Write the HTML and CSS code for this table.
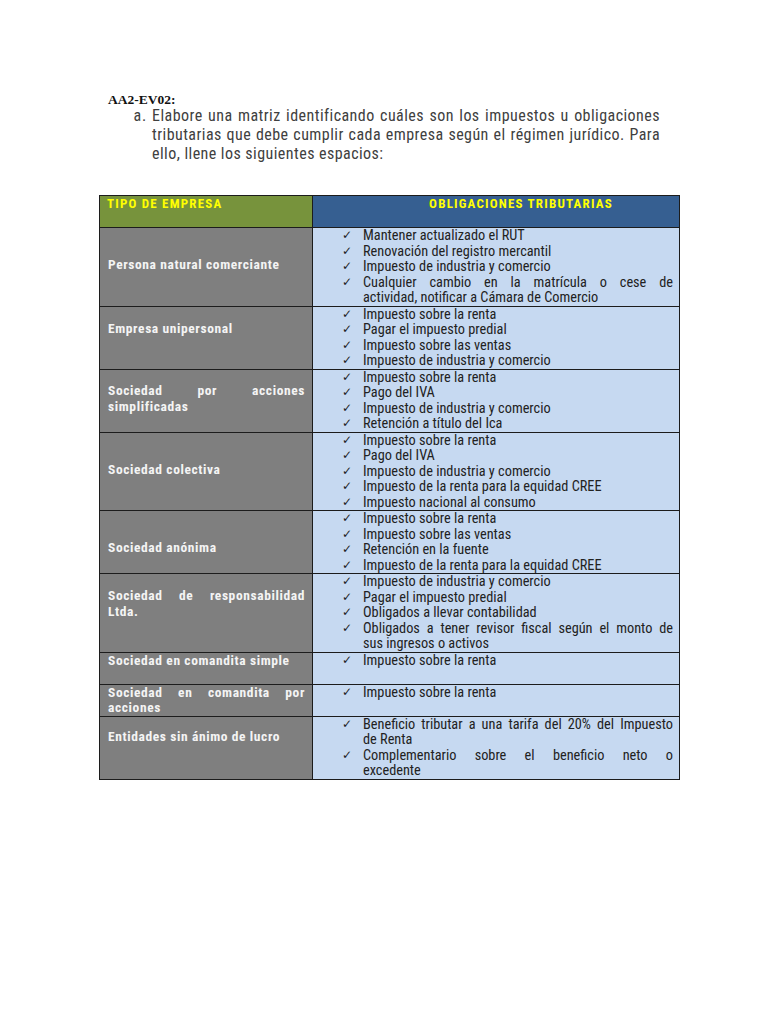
FILE: index.html
```html
<!DOCTYPE html>
<html lang="es">
<head>
<meta charset="utf-8">
<title>AA2-EV02</title>
<link rel="stylesheet" href="styles.css">
</head>
<body>
<main class="page">
  <h1 class="title">AA2-EV02:</h1>
  <ol class="steps">
    <li><span class="jl">Elabore una matriz identificando cuáles son los impuestos u obligaciones</span> <span class="jl">tributarias que debe cumplir cada empresa según el régimen jurídico. Para</span> <span class="ln">ello, llene los siguientes espacios:</span></li>
  </ol>

  <table class="matrix">
    <colgroup><col class="c1"><col class="c2"></colgroup>
    <thead>
      <tr>
        <th class="h-type">TIPO DE EMPRESA</th>
        <th class="h-obl">OBLIGACIONES TRIBUTARIAS</th>
      </tr>
    </thead>
    <tbody>
      <tr>
        <td class="type mid">Persona natural comerciante</td>
        <td class="obl"><ul>
          <li>Mantener actualizado el RUT</li>
          <li>Renovación del registro mercantil</li>
          <li>Impuesto de industria y comercio</li>
          <li><span class="jl">Cualquier cambio en la matrícula o cese de</span> <span class="ln">actividad, notificar a Cámara de Comercio</span></li>
        </ul></td>
      </tr>
      <tr>
        <td class="type top14">Empresa unipersonal</td>
        <td class="obl"><ul>
          <li>Impuesto sobre la renta</li>
          <li>Pagar el impuesto predial</li>
          <li>Impuesto sobre las ventas</li>
          <li>Impuesto de industria y comercio</li>
        </ul></td>
      </tr>
      <tr>
        <td class="type mid"><span class="jl">Sociedad por acciones</span> <span class="ln">simplificadas</span></td>
        <td class="obl"><ul>
          <li>Impuesto sobre la renta</li>
          <li>Pago del IVA</li>
          <li>Impuesto de industria y comercio</li>
          <li>Retención a título del Ica</li>
        </ul></td>
      </tr>
      <tr>
        <td class="type mid">Sociedad colectiva</td>
        <td class="obl"><ul>
          <li>Impuesto sobre la renta</li>
          <li>Pago del IVA</li>
          <li>Impuesto de industria y comercio</li>
          <li>Impuesto de la renta para la equidad CREE</li>
          <li>Impuesto nacional al consumo</li>
        </ul></td>
      </tr>
      <tr>
        <td class="type mid low">Sociedad anónima</td>
        <td class="obl"><ul>
          <li>Impuesto sobre la renta</li>
          <li>Impuesto sobre las ventas</li>
          <li>Retención en la fuente</li>
          <li>Impuesto de la renta para la equidad CREE</li>
        </ul></td>
      </tr>
      <tr>
        <td class="type top14"><span class="jl">Sociedad de responsabilidad</span> <span class="ln">Ltda.</span></td>
        <td class="obl"><ul>
          <li>Impuesto de industria y comercio</li>
          <li>Pagar el impuesto predial</li>
          <li>Obligados a llevar contabilidad</li>
          <li><span class="jl">Obligados a tener revisor fiscal según el monto de</span> <span class="ln">sus ingresos o activos</span></li>
        </ul></td>
      </tr>
      <tr>
        <td class="type top0">Sociedad en comandita simple</td>
        <td class="obl two"><ul>
          <li>Impuesto sobre la renta</li>
        </ul></td>
      </tr>
      <tr>
        <td class="type top0"><span class="jl">Sociedad en comandita por</span> <span class="ln">acciones</span></td>
        <td class="obl two"><ul>
          <li>Impuesto sobre la renta</li>
        </ul></td>
      </tr>
      <tr>
        <td class="type top12">Entidades sin ánimo de lucro</td>
        <td class="obl"><ul>
          <li><span class="jl">Beneficio tributar a una tarifa del 20% del Impuesto</span> <span class="ln">de Renta</span></li>
          <li><span class="jl">Complementario sobre el beneficio neto o</span> <span class="ln">excedente</span></li>
        </ul></td>
      </tr>
    </tbody>
  </table>
</main>
</body>
</html>
```

FILE: styles.css
```css
html, body {
  margin: 0;
  padding: 0;
  background: #ffffff;
}

.page {
  padding: 93px 0 0 99px;
  width: 580px;
  font-family: "Roboto", "Liberation Sans", Arial, sans-serif;
  font-stretch: condensed;
  color: #222222;
}

.title {
  margin: 0 0 0 9px;
  font-family: "Liberation Serif", "DejaVu Serif", serif;
  font-stretch: normal;
  font-weight: bold;
  font-size: 13.5px;
  line-height: 14px;
  color: #111111;
}

.jl {
  display: block;
  text-align: justify;
  text-align-last: justify;
}

.ln {
  display: block;
}

.steps {
  list-style: lower-alpha;
  margin: -1px 0 0 0;
  padding: 0 19px 0 53px;
  font-size: 16px;
  line-height: 19px;
  letter-spacing: 0.45px;
  color: #404040;
}

.steps li {
  padding-left: 0;
}

.steps li::marker {
  letter-spacing: 1px;
}

.matrix {
  margin-top: 32px;
  width: 580px;
  border-collapse: collapse;
  table-layout: fixed;
  border: 1px solid #1c1c1c;
  font-size: 14.3px;
  line-height: 15.5px;
}

.c1 { width: 213px; }
.c2 { width: 367px; }

.matrix th,
.matrix td {
  border: 1px solid #1c1c1c;
  padding: 0;
}

.matrix th {
  height: 31px;
  vertical-align: top;
  color: #ffff00;
  font-weight: bold;
  font-size: 13px;
  line-height: 15.5px;
  letter-spacing: 1.2px;
}

.h-type {
  background: #77933c;
  text-align: left;
  padding-left: 7px !important;
}

.h-obl {
  background: #365f91;
  text-align: center;
  padding-left: 50px !important;
}

.type {
  background: #7f7f7f;
  color: #f4f4f4;
  font-weight: bold;
  font-size: 13.5px;
  letter-spacing: 0.6px;
  padding: 0 7px 0 8px !important;
}

.mid { vertical-align: middle; padding-bottom: 4px !important; }
.low { padding-top: 14px !important; padding-bottom: 3px !important; }
.top0 { vertical-align: top; }
.top12 { vertical-align: top; padding-top: 12px !important; }
.top14 { vertical-align: top; padding-top: 14px !important; }

.obl {
  background: #c6d9f1;
  vertical-align: top;
}

.obl.two {
  height: 31px;
}

.obl ul {
  list-style: none;
  margin: 0;
  padding: 0 6px 0 50px;
}

.obl li {
  position: relative;
  color: #222222;
}

.obl li::before {
  content: "\2713";
  position: absolute;
  left: -21px;
  top: 0;
  font-family: "DejaVu Sans", sans-serif;
  font-stretch: normal;
  font-size: 12px;
  color: #1e1e1e;
}
```
